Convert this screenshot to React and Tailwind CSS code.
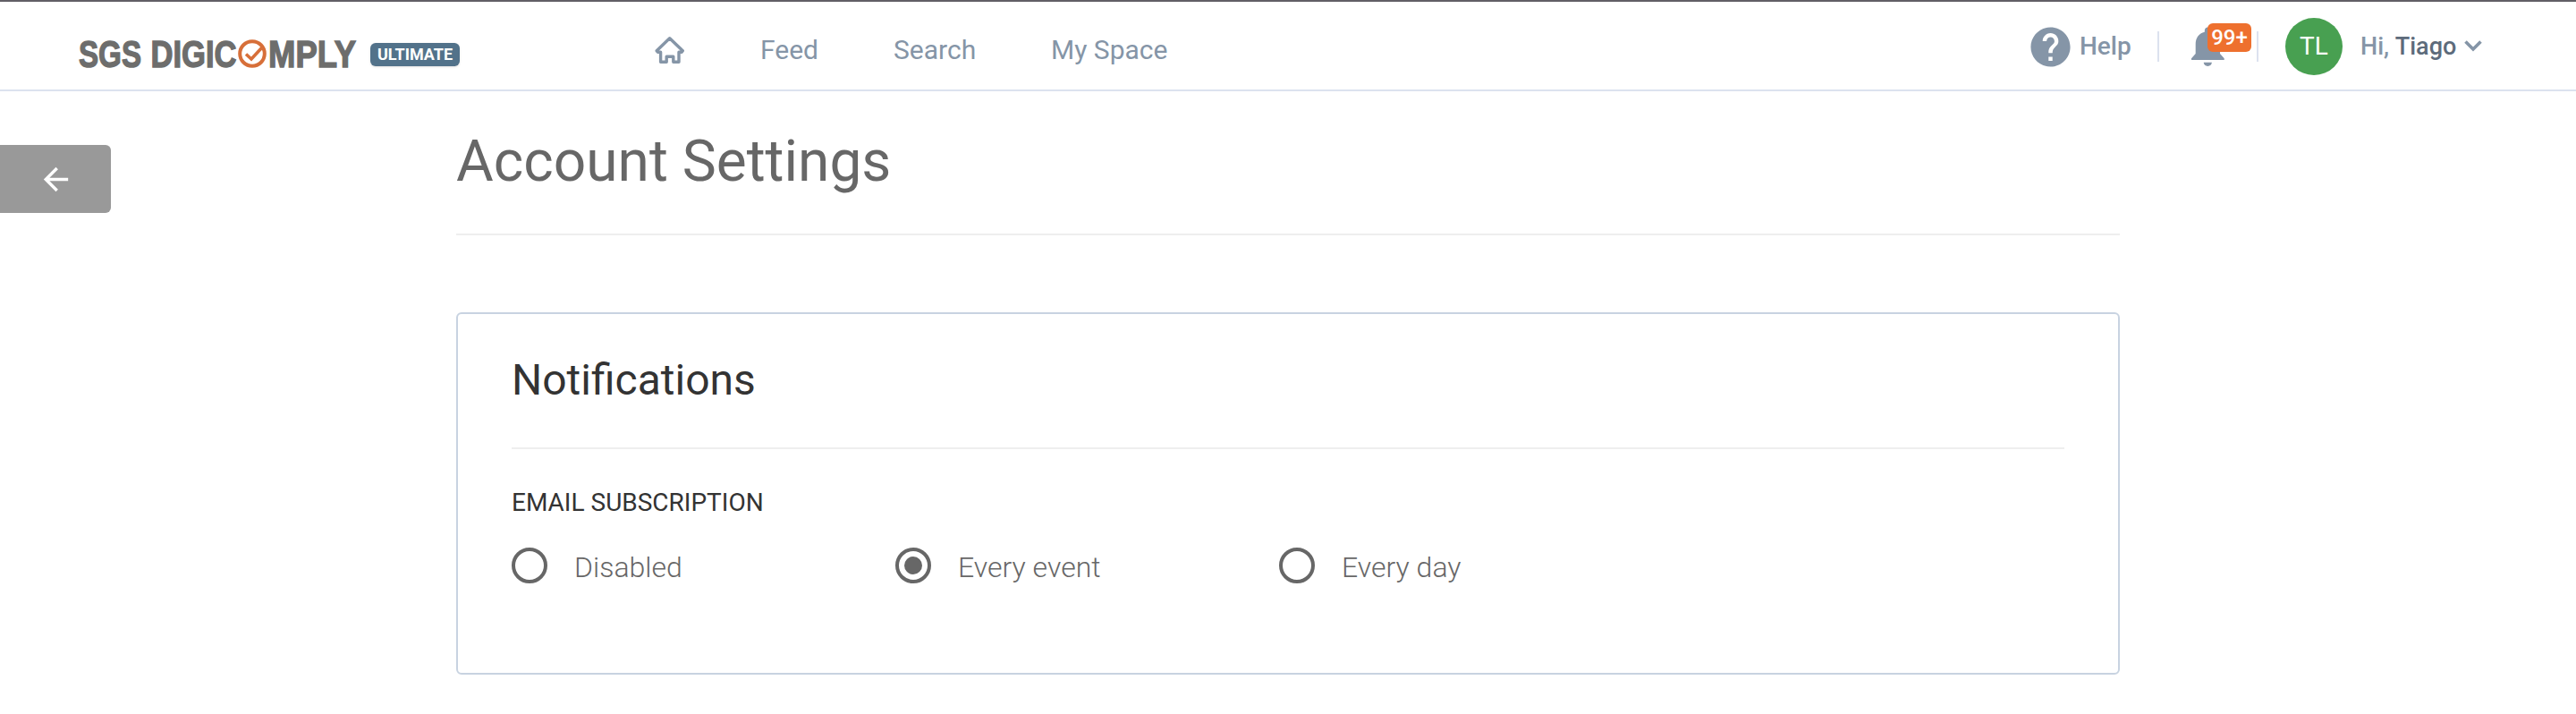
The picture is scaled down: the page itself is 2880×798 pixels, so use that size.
function Logo() {
  return (
    <svg className="-mt-[10px] h-[60px] w-[316px] shrink-0" viewBox="0 -10 316 60" fontFamily="Liberation Sans, Arial, sans-serif" fontWeight="700" fontSize="42" fill="#6d6d6c" stroke="#6d6d6c" strokeWidth="1.4">
      <text x="2" y="34.5" textLength="70" lengthAdjust="spacingAndGlyphs">SGS</text>
      <text x="82.500" y="34.5" textLength="96" lengthAdjust="spacingAndGlyphs">DIGIC</text>
      <text x="214" y="34.5" textLength="98" lengthAdjust="spacingAndGlyphs">MPLY</text>
      <g fill="none" stroke="#d76f39">
        <circle cx="196" cy="20" r="13.8" strokeWidth="4" />
        <path d="M189 20.5 L195 26 L207.5 12.5" strokeWidth="3.6" />
      </g>
    </svg>
  );
}

function Radio({ label, checked }) {
  return (
    <label className="flex w-[429px] items-center">
      <span className="flex size-10 items-center justify-center rounded-full border-4 border-[#676767]">
        {checked && <span className="size-5 rounded-full bg-[#676767]" />}
      </span>
      <span className="ml-[30px] pt-1 text-[32px] leading-[40px] font-light text-[#676767]">{label}</span>
    </label>
  );
}

export default function App() {
  return (
    <div className="h-[798px] w-[2880px] overflow-hidden bg-white font-['Roboto',sans-serif]">
      <header className="flex h-[102px] items-start border-t-2 border-b-2 border-t-[#625f66] border-b-[#dce2ef] text-[#8595a7]">
        <div className="flex w-[731px] pt-[38px] pl-[86px]">
          <Logo />
          <span className="mt-[8px] ml-[12px] flex h-[26px] w-[100px] items-center justify-center rounded-md bg-[#52728a] text-[18px] leading-none font-bold text-white shadow-sm">ULTIMATE</span>
        </div>
        <nav className="flex pt-[36px] text-[30px] leading-[36px]">
          <svg className="mt-[2px] h-[32px] w-[36px]" viewBox="0 0 36 32" fill="none" stroke="currentColor" strokeWidth="3.4" strokeLinejoin="round">
            <path d="M17.700 2.700 L32.300 16.800 L31.200 18.200 H28 V29.300 H21.800 V23.200 H14.200 V29.300 H7.600 V18.200 H4.400 L3.200 16.800 Z" />
          </svg>
          <span className="ml-[83px] w-[149px]">Feed</span>
          <span className="w-[176px]">Search</span>
          <span>My Space</span>
        </nav>
        <div className="ml-auto flex h-[100px] w-[612px] items-start pt-[18px]">
          <div className="flex h-16 items-center">
            <svg className="size-[53px] shrink-0 -ml-[2px]" viewBox="0 0 24 24" fill="currentColor">
              <path d="M12 2C6.48 2 2 6.48 2 12s4.48 10 10 10 10-4.48 10-10S17.52 2 12 2zm1 17h-2v-2h2v2zm2.07-7.75l-.9.92C13.45 12.9 13 13.5 13 15h-2v-.5c0-1.1.45-2.1 1.17-2.83l1.24-1.26c.37-.36.59-.86.59-1.41 0-1.1-.9-2-2-2s-2 .9-2 2H8c0-2.21 1.79-4 4-4s4 1.79 4 4c0 .88-.36 1.68-.93 2.25z" />
            </svg>
            <span className="ml-[6px] w-[87px] text-[28px] leading-none font-medium">Help</span>
            <span className="h-[34px] w-[2px] bg-[#dce2ef]" />
            <div className="relative ml-[36px] h-[46px] w-[73px]">
              <svg className="h-[46px] w-[37px]" viewBox="0 0 37 46" fill="currentColor">
                <path d="M18.3 45c2.6 0 4.6-2 4.6-4.2h-9.200c0 2.200 2 4.200 4.600 4.200zM32 31V20.500c0-7-3.700-12.200-10.200-13.700V5.200C21.800 3.200 20.200 1.500 18.300 1.500s-3.500 1.700-3.500 3.700v1.600C8.300 8.300 4.700 13.500 4.700 20.500v10.500L0 36.200v1.800h36.700v-1.800z" />
              </svg>
              <span className="absolute -top-[3px] left-[18px] flex h-8 w-[49px] items-center justify-center rounded-md bg-[#ee702e] text-[24px] leading-none font-medium text-white">99+</span>
            </div>
            <span className="h-[34px] w-[2px] bg-[#dce2ef]" />
            <span className="ml-[30px] flex size-16 items-center justify-center rounded-full bg-[#48a051] text-[28px] leading-none text-white">TL</span>
            <span className="ml-[20px] text-[27px] leading-none whitespace-pre"><span className="font-medium">Hi,</span> <b className="font-medium text-[#5d6b7b]">Tiago</b></span>
            <svg className="ml-[9px] h-[14px] w-[20px]" viewBox="0 0 20 14" fill="none" stroke="currentColor" strokeWidth="3.6">
              <path d="M1.500 1.500 L10 10 L18.500 1.500" />
            </svg>
          </div>
        </div>
      </header>
      <main className="flex items-start">
        <button className="mt-[60px] flex h-[76px] w-[124px] items-center justify-center rounded-r-md bg-[#999999] text-white">
          <svg className="size-[41px]" viewBox="0 0 24 24" fill="currentColor">
            <path d="M20 11H7.830l5.590-5.590L12 4l-8 8 8 8 1.410-1.410L7.830 13H20v-2z" />
          </svg>
        </button>
        <div className="ml-[386px] w-[1860px]">
          <h1 className="h-[161px] border-b-2 border-[#eeeeee] pt-[41px] text-[64px] leading-[76px] text-[#676767]">Account Settings</h1>
          <section className="mt-[86px] h-[405px] rounded-md border-2 border-[#c8d3e1] px-[60px]">
            <h2 className="h-[151px] border-b-2 border-[#eeeeee] pt-[46px] text-[48px] leading-[56px] text-[#333333]">Notifications</h2>
            <h3 className="mt-[44px] text-[28px] leading-[32px] text-[#333333]">EMAIL SUBSCRIPTION</h3>
            <div className="mt-[32px] flex">
              <Radio label="Disabled" />
              <Radio label="Every event" checked />
              <Radio label="Every day" />
            </div>
          </section>
        </div>
      </main>
    </div>
  );
}
